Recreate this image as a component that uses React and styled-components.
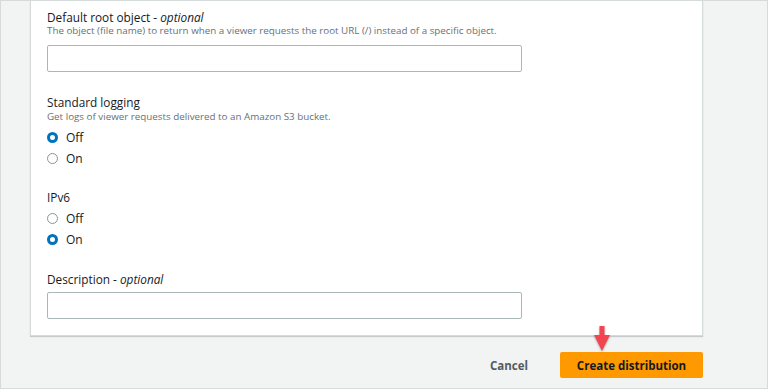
import React from 'react';
import styled, { createGlobalStyle } from 'styled-components';

const GlobalStyle = createGlobalStyle`
  html, body {
    margin: 0;
    padding: 0;
    background: #f2f3f3;
  }
  * {
    box-sizing: border-box;
  }
`;

const App = () => {
  return (
    <Frame>
      <GlobalStyle />
      <Card>
        <Field>
          <Label>
            Default root object - <em>optional</em>
          </Label>
          <Hint top={1}>
            The object (file name) to return when a viewer requests the root URL (/) instead of a specific object.
          </Hint>
          <TextInput gap={9} />
        </Field>

        <Field top={23}>
          <Label>Standard logging</Label>
          <Hint top={2}>Get logs of viewer requests delivered to an Amazon S3 bucket.</Hint>
          <RadioGroup top={5}>
            <Radio checked label="Off" />
            <Radio label="On" />
          </RadioGroup>
        </Field>

        <Field top={21}>
          <Label>IPv6</Label>
          <RadioGroup top={4}>
            <Radio label="Off" />
            <Radio checked label="On" />
          </RadioGroup>
        </Field>

        <Field top={22}>
          <Label>
            Description - <em>optional</em>
          </Label>
          <TextInput gap={6} />
        </Field>
      </Card>

      <Footer>
        <CancelButton>Cancel</CancelButton>
        <PrimaryWrap>
          <Arrow width="18" height="26" viewBox="0 0 18 26">
            <path d="M6.5 0 H11.5 V9 H17 L9 25 L1 9 H6.5 Z" fill="#f2454f" />
          </Arrow>
          <PrimaryButton>Create distribution</PrimaryButton>
        </PrimaryWrap>
      </Footer>
    </Frame>
  );
};

const Radio = ({ checked, label }) => (
  <RadioRow>
    <Dot checked={checked} />
    <span>{label}</span>
  </RadioRow>
);

const Frame = styled.div`
  width: 768px;
  height: 389px;
  border: 1px solid #d5dbdb;
  background: #f2f3f3;
  padding: 0 64px 0 29px;
  font-family: "Open Sans", Roboto, sans-serif;
  color: #16191f;
  overflow: hidden;
`;

const Card = styled.div`
  width: 673px;
  background: #fff;
  border: 1px solid #d5dbdb;
  border-top: none;
  box-shadow: 0 1px 1px rgba(0, 28, 36, 0.18);
  padding: 9px 16px 16px 16px;
`;

const Field = styled.div`
  display: flex;
  flex-direction: column;
  margin-top: ${(p) => p.top || 0}px;
`;

const Label = styled.div`
  font-size: 11.8px;
  line-height: 14px;
  color: #16191f;
  em {
    font-style: italic;
  }
`;

const Hint = styled.div`
  font-size: 9.8px;
  line-height: 11px;
  color: #687078;
  margin-top: ${(p) => p.top || 0}px;
`;

const TextInput = styled.input`
  margin-top: ${(p) => p.gap}px;
  width: 475px;
  height: 27px;
  border: 1px solid #aab7b8;
  border-radius: 2px;
  background: #fff;
  outline: none;
`;

const RadioGroup = styled.div`
  display: flex;
  flex-direction: column;
  margin-top: ${(p) => p.top || 0}px;
`;

const RadioRow = styled.div`
  display: flex;
  align-items: center;
  gap: 8px;
  height: 21px;
  font-size: 12px;
  color: #16191f;
`;

const Dot = styled.span`
  width: 11px;
  height: 11px;
  border-radius: 50%;
  background: #fff;
  border: ${(p) => (p.checked ? '3.5px solid #0073bb' : '1px solid #879596')};
`;

const Footer = styled.div`
  display: flex;
  justify-content: flex-end;
  align-items: center;
  gap: 16px;
  margin-top: 16px;
`;

const CancelButton = styled.button`
  border: none;
  background: transparent;
  font-family: inherit;
  font-weight: 700;
  font-size: 11.5px;
  color: #545b64;
  padding: 0 16px;
  height: 26px;
`;

const PrimaryWrap = styled.div`
  position: relative;
`;

const PrimaryButton = styled.button`
  height: 26px;
  width: 143px;
  border: none;
  border-radius: 2px;
  background: #ff9900;
  color: #16191f;
  font-family: inherit;
  font-weight: 700;
  font-size: 11.5px;
  padding: 0;
`;

const Arrow = styled.svg`
  position: absolute;
  left: 33px;
  top: -26px;
  filter: drop-shadow(0 1px 1px rgba(0, 0, 0, 0.3));
`;

export default App;
